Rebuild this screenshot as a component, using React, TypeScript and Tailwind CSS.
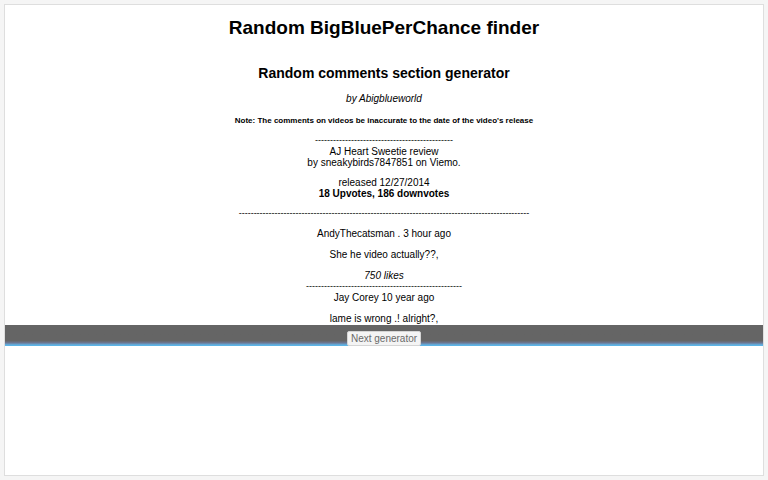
function Rule({ length }: { length: number }) {
  return <span className="block text-[9px] leading-[11px] whitespace-nowrap">{"-".repeat(length)}</span>;
}

export default function App() {
  return (
    <div className="flex h-screen flex-col bg-[#f5f5f5] p-1 font-['Liberation_Sans',Arial,sans-serif] text-black">
      <main className="flex-1 overflow-hidden border border-[#dedede] bg-white text-center text-[10px] leading-[11px]">
        <h1 className="mt-[11px] text-[19px] leading-[24px] font-bold">Random BigBluePerChance finder</h1>
        <h2 className="mt-6 text-[14px] leading-[18px] font-bold">Random comments section generator</h2>
        <div className="mt-[11px] flex flex-col gap-[9px]">
          <p className="italic">by Abigblueworld</p>
          <h5 className="pt-[2px] text-[8px] font-bold">
            Note: The comments on videos be inaccurate to the date of the video's release
          </h5>
          <p>
            <Rule length={46} />
            AJ Heart Sweetie review
            <br />
            by sneakybirds7847851 on Viemo.
          </p>
          <p>
            released 12/27/2014
            <br />
            <b>18 Upvotes, 186 downvotes</b>
          </p>
          <p>
            <Rule length={97} />
          </p>
          <div className="flex flex-col gap-[10px]">
            <p>AndyThecatsman . 3 hour ago</p>
            <p>She he video actually??,</p>
            <p>
              <i>750 likes</i>
              <Rule length={52} />
              Jay Corey 10 year ago
            </p>
            <p>lame is wrong .! alright?,</p>
          </div>
        </div>
        <div className="mt-px flex h-[21px] items-end justify-center bg-linear-to-b from-[#656565] from-75% via-[#6c7794] via-85% to-[#5cb4e6] to-95%">
          <button
            type="button"
            className="h-[15px] rounded-[2px] border border-[#d5d5d5] bg-[#f4f4f4] px-[3px] text-[#6a6a6a]"
          >
            Next generator
          </button>
        </div>
      </main>
    </div>
  );
}
